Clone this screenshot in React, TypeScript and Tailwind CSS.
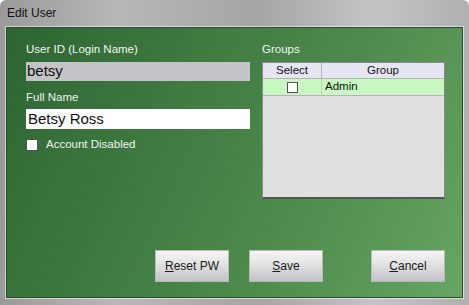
import React from "react";

const font = { fontFamily: '"Liberation Sans", Arial, sans-serif' };

function Btn({ first, rest, w }: { first: string; rest: string; w: string }) {
  return (
    <div
      className={`${w} h-[32px] flex items-center justify-center text-[12px] text-[#1a1a1a] bg-[linear-gradient(180deg,#f6f6f6,#e2e2e2_45%,#c2c1c7)] border border-[#b8bcb8]`}
    >
      <span>
        <span className="underline">{first}</span>
        {rest}
      </span>
    </div>
  );
}

export default function App() {
  return (
    <div
      className="w-[469px] h-[305px] flex flex-col bg-[linear-gradient(90deg,#9a9a9a,#b8b8b8_25%,#a5a5a5_55%,#c4c4c4_80%,#b0b0b0)] rounded-t-[6px] overflow-hidden"
      style={font}
    >
      <div className="h-[27px] flex items-center pl-[7px] text-[12px] text-[#111] pb-[1px]">Edit User</div>
      <div className="mx-[6px] h-[271px] border border-[#2c4a2c] shadow-[0_0_0_1px_rgba(255,255,255,0.55)] bg-[linear-gradient(115deg,#2e6533_0%,#3f7a41_35%,#4f8c4d_65%,#67a564_100%)] flex flex-col">
        <div className="flex pt-[14px] pl-[19px] pr-[16px]">
          <div className="w-[224px] flex flex-col">
            <div className="h-[16px] flex items-center text-[11.5px] text-[#f0f4f0]">User ID (Login Name)</div>
            <div className="mt-[4px] h-[19px] bg-[#c4c3c8] flex items-center pl-[1px] text-[15px] text-[#111]">betsy</div>
            <div className="mt-[9px] h-[16px] flex items-center text-[11.5px] text-[#f0f4f0]">Full Name</div>
            <div className="mt-[3px] h-[20px] bg-white flex items-center pl-[2px] text-[15px] text-[#111]">Betsy Ross</div>
            <div className="mt-[10px] h-[12px] flex items-center">
              <div className="w-[12px] h-[12px] bg-white border border-[#555]" />
              <span className="ml-[8px] text-[11.5px] text-[#f0f4f0]">Account Disabled</span>
            </div>
          </div>
          <div className="ml-[12px] w-[183px] flex flex-col">
            <div className="h-[16px] flex items-center text-[11.5px] text-[#f0f4f0]">Groups</div>
            <div className="mt-[4px] h-[137px] bg-[#e0e0e0] border border-[#8a8a8a] border-b-[2px] border-b-[#555] flex flex-col">
              <div className="h-[16px] flex bg-[#e6e6f2] border-b border-[#b4b4b4] text-[11.5px] text-[#111]">
                <div className="w-[59px] flex items-center justify-center border-r border-[#b4b4b4]">Select</div>
                <div className="flex-1 flex items-center justify-center">Group</div>
              </div>
              <div className="h-[17px] flex bg-[#c8f7c2] border-b border-[#b4b4b4] text-[11.5px] text-[#111]">
                <div className="w-[59px] flex items-center justify-center border-r border-[#b4d8b0]">
                  <div className="w-[11px] h-[11px] bg-white border border-[#555]" />
                </div>
                <div className="flex-1 flex items-center pl-[3px]">Admin</div>
              </div>
            </div>
          </div>
        </div>
        <div className="flex mt-auto mb-[15px] pl-[148px]">
          <Btn first="R" rest="eset PW" w="w-[74px]" />
          <div className="ml-[20px]">
            <Btn first="S" rest="ave" w="w-[74px]" />
          </div>
          <div className="ml-[48px]">
            <Btn first="C" rest="ancel" w="w-[74px]" />
          </div>
        </div>
      </div>
    </div>
  );
}
